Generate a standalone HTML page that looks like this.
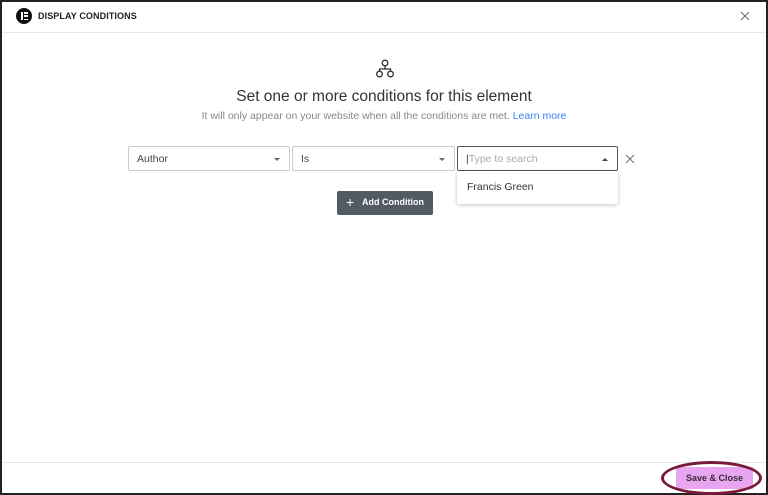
<!DOCTYPE html>
<html><head><style>
*{box-sizing:border-box;margin:0;padding:0}
body{width:768px;height:495px;background:#fff;font-family:"Liberation Sans",sans-serif;position:relative;overflow:hidden}
.frame{position:absolute;left:0;top:0;width:768px;height:495px;border:2px solid #222}
.hdr{position:absolute;left:2px;top:2px;right:2px;height:31px;border-bottom:1px solid #e6e6e6}
.logo{position:absolute;left:16px;top:8px;width:16px;height:16px;border-radius:50%;background:#111}
.logo i{position:absolute;background:#fff}
.title{position:absolute;left:38px;top:11px;font-size:9px;font-weight:bold;color:#222;letter-spacing:.1px}
.close{position:absolute;left:739px;top:10px}
.foot{position:absolute;left:2px;right:2px;top:462px;border-top:1px solid #e6e6e6}
.h1{position:absolute;left:0;width:768px;top:88px;text-align:center;font-size:15.5px;color:#333}
.sub{position:absolute;left:0;width:768px;top:110px;text-align:center;font-size:10.5px;color:#888}
.sub a{color:#3b82f6;text-decoration:none}
.sel{position:absolute;top:146px;height:25px;border:1px solid #ccc;border-radius:2px;font-size:10.5px;color:#444;padding:6px 8px}
.sel .ar{position:absolute;right:9px;top:11px;width:0;height:0;border-left:3.5px solid transparent;border-right:3.5px solid transparent;border-top:3.5px solid #666}
.sel .up{border-top:none;border-bottom:3.5px solid #444}
.dd{position:absolute;left:457px;top:171px;width:161px;height:33px;background:#fff;box-shadow:0 1px 4px rgba(0,0,0,.25);border-radius:2px;font-size:10.5px;color:#333;padding:10px 10px}
.btn{position:absolute;left:337px;top:191px;width:96px;height:24px;background:#525a64;border-radius:2px;color:#fff;font-size:9px;font-weight:bold;padding:6px 0 0 25px}
.btn span{position:absolute;left:9px;top:3px;font-size:14px;font-weight:normal}
.save{position:absolute;left:676px;top:467px;width:77px;height:22px;background:#e9a6f0;font-size:9px;font-weight:bold;color:#3a2a3a;text-align:center;padding-top:6px}
.ell{position:absolute;left:661px;top:461px;width:101px;height:34px;border:3px solid #7a1a3a;border-radius:50%}
</style></head><body>
<div class="frame"></div>
<div class="hdr"></div>
<div class="logo"><i style="left:5px;top:4px;width:1.5px;height:8px"></i><i style="left:8px;top:4px;width:3.5px;height:1.5px"></i><i style="left:8px;top:7.2px;width:3.5px;height:1.5px"></i><i style="left:8px;top:10.5px;width:3.5px;height:1.5px"></i></div>
<div class="title">DISPLAY CONDITIONS</div>
<svg class="close" width="12" height="12" viewBox="0 0 12 12"><path d="M2 2L10 10M10 2L2 10" stroke="#777" stroke-width="1.2"/></svg>
<svg style="position:absolute;left:375px;top:59px" width="20" height="20" viewBox="0 0 20 20" fill="none" stroke="#333" stroke-width="1.3"><circle cx="10" cy="4" r="2.8"/><circle cx="4.5" cy="15" r="2.8"/><circle cx="15.5" cy="15" r="2.8"/><path d="M10 7v3M4.5 12.2V10h11v2.2"/></svg>
<div class="h1">Set one or more conditions for this element</div>
<div class="sub">It will only appear on your website when all the conditions are met. <a>Learn more</a></div>
<div class="sel" style="left:128px;width:162px">Author<div class="ar"></div></div>
<div class="sel" style="left:292px;width:163px">Is<div class="ar"></div></div>
<div class="sel" style="left:457px;width:161px;border-color:#555;color:#aaa"><span style="color:#333">|</span>Type to search<div class="ar up"></div></div>
<svg style="position:absolute;left:625px;top:154px" width="10" height="10" viewBox="0 0 10 10"><path d="M1 1L9 9M9 1L1 9" stroke="#777" stroke-width="1.1"/></svg>
<div class="dd">Francis Green</div>
<div class="btn"><span>+</span>Add Condition</div>
<div class="foot"></div>
<div class="save">Save &amp; Close</div>
<div class="ell"></div>
</body></html>
